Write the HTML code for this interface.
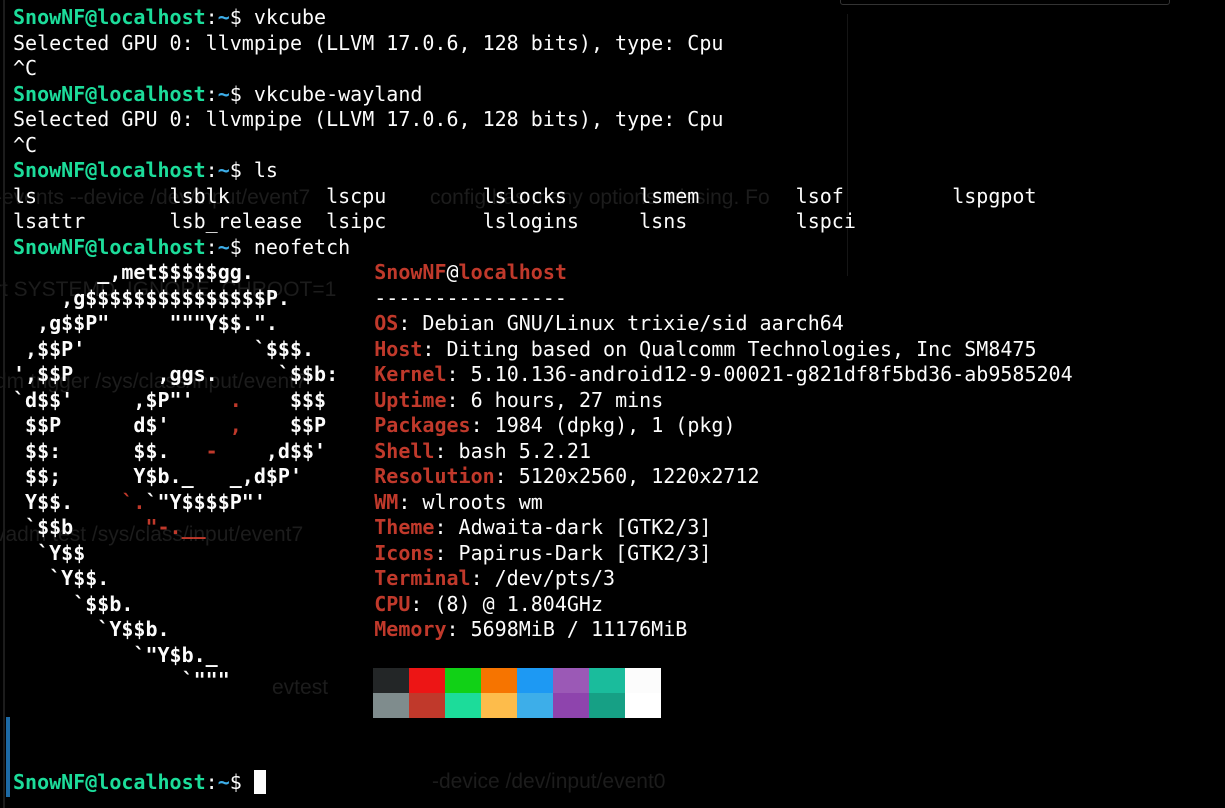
<!DOCTYPE html>
<html><head><meta charset="utf-8"><style>
html,body{margin:0;padding:0;background:#000;width:1225px;height:808px;overflow:hidden;position:relative}
pre{position:absolute;left:13px;top:5px;margin:0;font-family:"DejaVu Sans Mono","Liberation Mono",monospace;font-size:20px;line-height:25.5px;color:#fcfcfc;white-space:pre}
.g{color:#1cdc9a;font-weight:bold}.b{color:#3daee9;font-weight:bold}
.r{color:#c0392b;font-weight:bold}.w{color:#fcfcfc;font-weight:bold}
.a{color:#fcfcfc;font-weight:bold}.ar{color:#c0392b;font-weight:bold}
.ghost{position:absolute;font-family:"Liberation Sans",sans-serif;font-size:21px;color:#1c1c1c}
.sw{position:absolute;width:36px;height:25px}
</style></head><body>
<div style="position:absolute;left:3px;top:0;width:2px;height:808px;background:#1c1c1c"></div>
<div style="position:absolute;left:6px;top:717px;width:4px;height:80px;background:#1d6aa5"></div>
<div style="position:absolute;left:840px;top:-4px;width:328px;height:7px;border:1px solid #333;border-radius:3px"></div>
<div style="position:absolute;left:847px;top:14px;width:1px;height:262px;background:#151515"></div>
<div class="ghost" style="left:-5px;top:186px">-events --device /dev/input/event7</div>
<div class="ghost" style="left:430px;top:186px">config has many options missing. Fo</div>
<div class="ghost" style="left:-5px;top:278px">rt SYSTEMD_IGNORE_CHROOT=1</div>
<div class="ghost" style="left:-5px;top:370px">dm trigger /sys/class/input/event7</div>
<div class="ghost" style="left:-5px;top:523px">vadm test /sys/class/input/event7</div>
<div class="ghost" style="left:272px;top:676px">evtest</div>
<div class="ghost" style="left:432px;top:770px">-device /dev/input/event0</div>
<pre><span class="g">SnowNF@localhost</span>:<span class="b">~</span>$ vkcube
Selected GPU 0: llvmpipe (LLVM 17.0.6, 128 bits), type: Cpu
^C
<span class="g">SnowNF@localhost</span>:<span class="b">~</span>$ vkcube-wayland
Selected GPU 0: llvmpipe (LLVM 17.0.6, 128 bits), type: Cpu
^C
<span class="g">SnowNF@localhost</span>:<span class="b">~</span>$ ls
ls           lsblk        lscpu        lslocks      lsmem        lsof         lspgpot
lsattr       lsb_release  lsipc        lslogins     lsns         lspci
<span class="g">SnowNF@localhost</span>:<span class="b">~</span>$ neofetch
<span class="a">       _,met$$$$$gg.          </span><span class="r">SnowNF</span>@<span class="r">localhost</span>
<span class="a">    ,g$$$$$$$$$$$$$$$P.       </span>----------------
<span class="a">  ,g$$P"     """Y$$.".        </span><span class="r">OS</span>: Debian GNU/Linux trixie/sid aarch64
<span class="a"> ,$$P'              `$$$.     </span><span class="r">Host</span>: Diting based on Qualcomm Technologies, Inc SM8475
<span class="a">',$$P       ,ggs.     `$$b:   </span><span class="r">Kernel</span>: 5.10.136-android12-9-00021-g821df8f5bd36-ab9585204
<span class="a">`d$$'     ,$P"'   </span><span class="ar">.</span><span class="a">    $$$    </span><span class="r">Uptime</span>: 6 hours, 27 mins
<span class="a"> $$P      d$'     </span><span class="ar">,</span><span class="a">    $$P    </span><span class="r">Packages</span>: 1984 (dpkg), 1 (pkg)
<span class="a"> $$:      $$.   </span><span class="ar">-</span><span class="a">    ,d$$'    </span><span class="r">Shell</span>: bash 5.2.21
<span class="a"> $$;      Y$b._   _,d$P'      </span><span class="r">Resolution</span>: 5120x2560, 1220x2712
<span class="a"> Y$$.    </span><span class="ar">`.</span><span class="a">`"Y$$$$P"'         </span><span class="r">WM</span>: wlroots wm
<span class="a"> `$$b      </span><span class="ar">"-.__</span><span class="a">              </span><span class="r">Theme</span>: Adwaita-dark [GTK2/3]
<span class="a">  `Y$$                        </span><span class="r">Icons</span>: Papirus-Dark [GTK2/3]
<span class="a">   `Y$$.                      </span><span class="r">Terminal</span>: /dev/pts/3
<span class="a">     `$$b.                    </span><span class="r">CPU</span>: (8) @ 1.804GHz
<span class="a">       `Y$$b.                 </span><span class="r">Memory</span>: 5698MiB / 11176MiB
<span class="a">          `"Y$b._</span>
<span class="a">              `"""</span>



<span class="g">SnowNF@localhost</span>:<span class="b">~</span>$ <span style="background:#fcfcfc"> </span></pre>
<div class="sw" style="left:373px;top:668px;background:#232627"></div>
<div class="sw" style="left:409px;top:668px;background:#ed1515"></div>
<div class="sw" style="left:445px;top:668px;background:#11d116"></div>
<div class="sw" style="left:481px;top:668px;background:#f67400"></div>
<div class="sw" style="left:517px;top:668px;background:#1d99f3"></div>
<div class="sw" style="left:553px;top:668px;background:#9b59b6"></div>
<div class="sw" style="left:589px;top:668px;background:#1abc9c"></div>
<div class="sw" style="left:625px;top:668px;background:#fcfcfc"></div>
<div class="sw" style="left:373px;top:693px;background:#7f8c8d"></div>
<div class="sw" style="left:409px;top:693px;background:#c0392b"></div>
<div class="sw" style="left:445px;top:693px;background:#1cdc9a"></div>
<div class="sw" style="left:481px;top:693px;background:#fdbc4b"></div>
<div class="sw" style="left:517px;top:693px;background:#3daee9"></div>
<div class="sw" style="left:553px;top:693px;background:#8e44ad"></div>
<div class="sw" style="left:589px;top:693px;background:#16a085"></div>
<div class="sw" style="left:625px;top:693px;background:#ffffff"></div>
</body></html>
